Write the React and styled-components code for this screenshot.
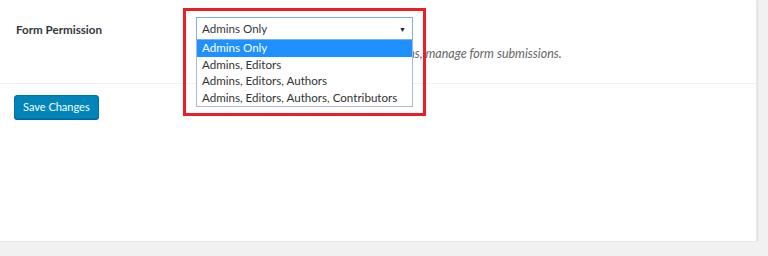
import React from 'react'
import styled, { createGlobalStyle } from 'styled-components';

const GlobalStyle = createGlobalStyle`
    body {
        margin: 0;
        background: #f1f1f1;
        font-family: Lato, "Open Sans", sans-serif;
        color: #23282d;
    }
`;

const options = [
    "Admins Only",
    "Admins, Editors",
    "Admins, Editors, Authors",
    "Admins, Editors, Authors, Contributors",
];

export default function App() {
    return (
        <>
            <GlobalStyle />
            <Panel>
                <FormRow>
                    <Label>Form Permission</Label>
                    <Field>
                        <SelectWrap>
                            <Select>
                                <span>Admins Only</span>
                                <Arrow>▼</Arrow>
                            </Select>
                            <OptionList>
                                {options.map((o, i) => (
                                    <Option key={o} $active={i === 0}>{o}</Option>
                                ))}
                            </OptionList>
                            <Highlight />
                        </SelectWrap>
                        <Description>Select who will be able to view or edit items, manage form submissions.</Description>
                    </Field>
                </FormRow>
                <Actions>
                    <PrimaryButton>Save Changes</PrimaryButton>
                </Actions>
            </Panel>
        </>
    )
}

const Panel = styled.div`
    width: 757px;
    height: 242px;
    background: #fff;
    box-shadow: 1px 1px 1px rgba(0,0,0,.06);
    border-right: 1px solid #e8e8e8;
    border-bottom: 1px solid #e8e8e8;
    box-sizing: border-box;
`;

const FormRow = styled.div`
    display: flex;
    height: 84px;
    border-bottom: 1px solid #f0f0f0;
    box-sizing: border-box;
`;

const Label = styled.div`
    width: 180px;
    padding: 21px 0 0 16px;
    box-sizing: border-box;
    font-size: 11.6px;
    font-weight: 700;
    color: #32373c;
    line-height: 18px;
`;

const Field = styled.div`
    padding: 17px 0 0 16px;
`;

const SelectWrap = styled.div`
    position: relative;
    width: 217px;
`;

const Select = styled.div`
    height: 23px;
    border: 1px solid #7fb0e0;
    box-sizing: border-box;
    display: flex;
    align-items: center;
    justify-content: space-between;
    padding: 0 6px 0 5px;
    font-size: 11.6px;
    color: #32373c;
    background: #fff;
`;

const Arrow = styled.span`
    font-size: 7px;
    color: #222;
`;

const OptionList = styled.div`
    position: absolute;
    top: 23px;
    left: 0;
    width: 217px;
    background: #fff;
    border: 1px solid #a9bbd3;
    border-top: none;
    box-sizing: border-box;
    z-index: 2;
`;

const Option = styled.div`
    height: 16.5px;
    line-height: 16.5px;
    padding-left: 5px;
    font-size: 11.6px;
    color: ${p => p.$active ? '#fff' : '#333'};
    background: ${p => p.$active ? '#1e90ff' : 'transparent'};
    white-space: nowrap;
`;

const Highlight = styled.div`
    position: absolute;
    top: -9px;
    left: -13px;
    width: 243px;
    height: 108px;
    border: 3px solid #ee1c25;
    box-sizing: border-box;
    z-index: 3;
    pointer-events: none;
`;

const Description = styled.p`
    margin: 6px 0 0;
    font-size: 12.5px;
    font-style: italic;
    color: #666;
    white-space: nowrap;
`;

const Actions = styled.div`
    padding: 11px 0 0 14px;
`;

const PrimaryButton = styled.button`
    height: 24px;
    padding: 0 8px;
    background: #0085ba;
    border: 1px solid #0073aa;
    border-radius: 3px;
    box-shadow: 0 1px 0 #006799;
    color: #fff;
    font-family: Lato, "Open Sans", sans-serif;
    font-size: 11px;
    line-height: 22px;
`;
